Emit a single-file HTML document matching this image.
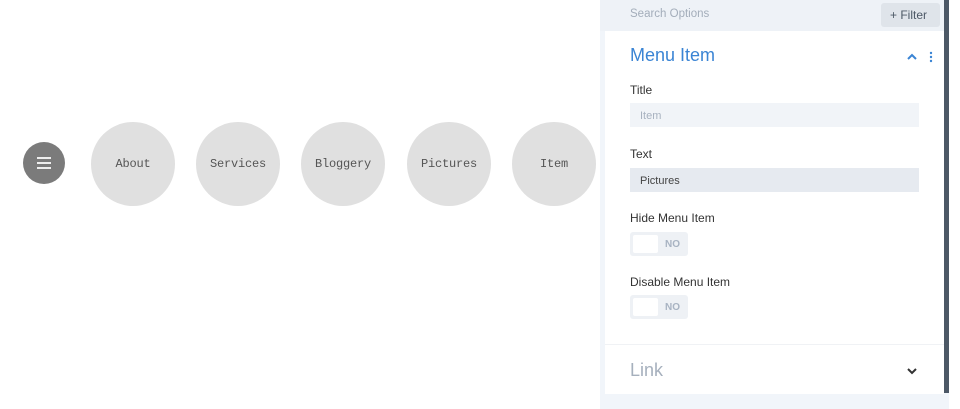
<!DOCTYPE html>
<html><head><style>
*{margin:0;padding:0;box-sizing:border-box}
body{width:960px;height:409px;background:#fff;position:relative;overflow:hidden;font-family:"Liberation Sans",sans-serif}
.c{position:absolute;width:84px;height:84px;border-radius:50%;background:#e0e0e0;top:122px;display:flex;align-items:center;justify-content:center;font-family:"Liberation Mono",monospace;font-size:12px;color:#555;letter-spacing:-0.2px}
.hb{position:absolute;left:23px;top:142px;width:42px;height:42px;border-radius:50%;background:#7b7b7b}
.hb i{position:absolute;left:14px;width:14px;height:2px;background:#eee}
.side{position:absolute;left:600px;top:0;width:349px;height:409px;background:#f1f5fa}
.top{position:absolute;left:0;top:0;width:345px;height:31px;background:#eef2f7}
.panel{position:absolute;left:5px;top:31px;width:339px;height:363px;background:#fff}
.bar{position:absolute;left:344px;top:0;width:5px;height:393px;background:#4c5866}
.lbl{position:absolute;left:30px;font-size:12px;color:#333}
.in{position:absolute;left:30px;width:289px;height:24px;font-size:11px;padding:7px 0 0 10px}
.tg{position:absolute;left:30px;width:58px;height:24px;background:#eef1f5;border-radius:3px}
.tg b{position:absolute;left:3px;top:3px;width:25px;height:18px;background:#fff;border-radius:2px}
.tg span{position:absolute;left:35px;top:7px;font-size:10px;font-weight:bold;color:#a8b3c2}
</style></head><body>
<div class="hb"><i style="top:15px"></i><i style="top:20px"></i><i style="top:25px"></i></div>
<div class="c" style="left:91px">About</div>
<div class="c" style="left:196px">Services</div>
<div class="c" style="left:301px">Bloggery</div>
<div class="c" style="left:407px">Pictures</div>
<div class="c" style="left:512px">Item</div>
<div class="side">
<div class="top">
<div style="position:absolute;left:30px;top:8px;font-size:11.5px;color:#a3adba">Search Options</div>
<div style="position:absolute;left:281px;top:3px;width:59px;height:24px;background:#dfe4ea;border-radius:3px;font-size:12px;color:#4c5866;padding:5px 0 0 9px">+ Filter</div>
</div>
<div class="panel"></div>
<div style="position:absolute;left:30px;top:45px;font-size:18px;color:#3a84d4">Menu Item</div>
<svg style="position:absolute;left:306px;top:52px" width="12" height="10"><path d="M2 7 L6 3 L10 7" stroke="#3a84d4" stroke-width="2" fill="none"/></svg>
<svg style="position:absolute;left:328px;top:51px" width="6" height="12"><circle cx="3" cy="2" r="1.2" fill="#3a84d4"/><circle cx="3" cy="6" r="1.2" fill="#3a84d4"/><circle cx="3" cy="10" r="1.2" fill="#3a84d4"/></svg>
<div class="lbl" style="top:83px">Title</div>
<div class="in" style="top:103px;background:#f1f4f8;color:#a8b2c0">Item</div>
<div class="lbl" style="top:147px">Text</div>
<div class="in" style="top:168px;background:#e6eaf0;color:#444">Pictures</div>
<div class="lbl" style="top:211px">Hide Menu Item</div>
<div class="tg" style="top:232px"><b></b><span>NO</span></div>
<div class="lbl" style="top:275px">Disable Menu Item</div>
<div class="tg" style="top:295px"><b></b><span>NO</span></div>
<div style="position:absolute;left:5px;top:344px;width:339px;height:1px;background:#f0f2f5"></div>
<div style="position:absolute;left:30px;top:360px;font-size:18px;color:#a6b0bd">Link</div>
<svg style="position:absolute;left:306px;top:366px" width="12" height="10"><path d="M2 3 L6 7 L10 3" stroke="#333" stroke-width="2" fill="none"/></svg>
<div class="bar"></div>
</div>
</body></html>
